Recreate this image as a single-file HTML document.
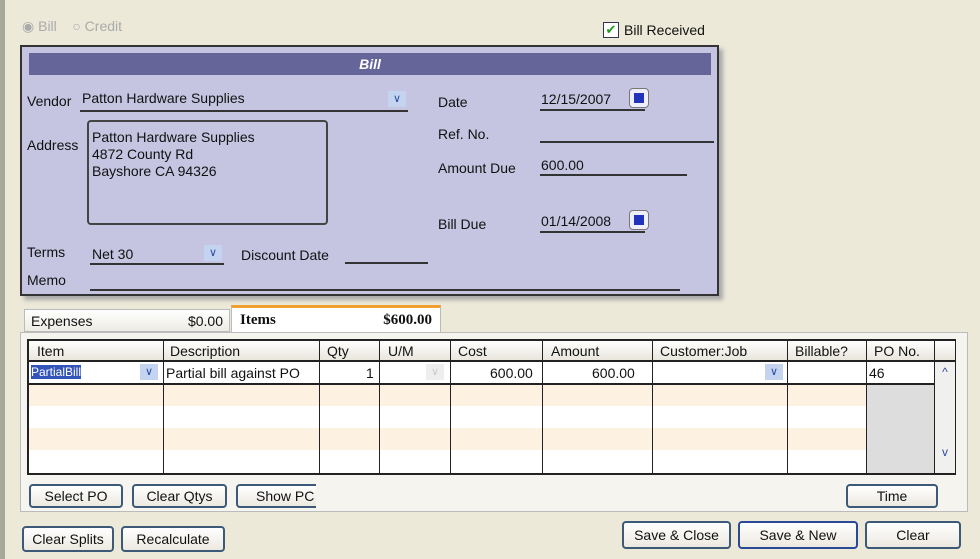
<!DOCTYPE html>
<html><head><style>
*{margin:0;padding:0;box-sizing:border-box}
body{width:980px;height:559px;overflow:hidden;background:#ece9d8;font-family:"Liberation Sans",sans-serif;font-size:14px;color:#111;position:relative}
.a{position:absolute}
.ln{position:absolute;height:2px;background:#333}
.btn{position:absolute;border:2px solid #3c5a78;border-radius:4px;background:linear-gradient(#fff,#ece9e0);text-align:center;font-size:14px;line-height:20px}
.dd{position:absolute;width:18px;height:16px;background:#c4d4f0;color:#2a4aa0;font-size:11px;text-align:center;line-height:16px}
.cal{position:absolute;width:20px;height:20px;border:1px solid #777;border-radius:4px;background:#eef;}
.cal:after{content:"";position:absolute;left:4px;top:4px;width:10px;height:10px;background:#2233bb}
.vl{position:absolute;top:339px;width:1px;height:135px;background:#222}
</style></head><body>
<div class="a" style="left:0;top:0;width:5px;height:559px;background:#a8a89a"></div>
<div class="a" style="left:22px;top:18px;color:#aaa">◉ Bill &nbsp;&nbsp;&nbsp;○ Credit</div>
<div class="a" style="left:603px;top:22px;width:16px;height:16px;border:1px solid #335;background:#fff;color:#1a9a1a;font-size:13px;line-height:14px;text-align:center">✔</div>
<div class="a" style="left:624px;top:22px;font-size:14px">Bill Received</div>
<!-- bill panel -->
<div class="a" style="left:20px;top:45px;width:699px;height:251px;background:#c5c5e2;border:2px solid #333;box-shadow:4px 4px 4px #aaa"></div>
<div class="a" style="left:29px;top:53px;width:682px;height:22px;background:#65659a;color:#fff;font-weight:bold;font-style:italic;text-align:center;line-height:22px;font-size:14px">Bill</div>
<div class="a" style="left:27px;top:93px">Vendor</div>
<div class="a" style="left:82px;top:90px">Patton Hardware Supplies</div>
<div class="dd" style="left:388px;top:91px">∨</div>
<div class="ln" style="left:80px;top:110px;width:328px"></div>
<div class="a" style="left:27px;top:137px">Address</div>
<div class="a" style="left:87px;top:120px;width:241px;height:105px;border:2px solid #444;border-radius:4px;padding:7px 3px;line-height:17px">Patton Hardware Supplies<br>4872 County Rd<br>Bayshore CA 94326</div>
<div class="a" style="left:27px;top:244px">Terms</div>
<div class="a" style="left:92px;top:246px">Net 30</div>
<div class="dd" style="left:204px;top:245px">∨</div>
<div class="ln" style="left:90px;top:263px;width:134px"></div>
<div class="a" style="left:241px;top:247px">Discount Date</div>
<div class="ln" style="left:345px;top:262px;width:83px"></div>
<div class="a" style="left:27px;top:272px">Memo</div>
<div class="ln" style="left:90px;top:289px;width:590px"></div>
<div class="a" style="left:438px;top:94px">Date</div>
<div class="a" style="left:541px;top:91px">12/15/2007</div>
<div class="cal" style="left:629px;top:88px"></div>
<div class="ln" style="left:540px;top:109px;width:105px"></div>
<div class="a" style="left:438px;top:126px">Ref. No.</div>
<div class="ln" style="left:540px;top:141px;width:174px"></div>
<div class="a" style="left:438px;top:160px">Amount Due</div>
<div class="a" style="left:541px;top:157px">600.00</div>
<div class="ln" style="left:540px;top:174px;width:147px"></div>
<div class="a" style="left:438px;top:216px">Bill Due</div>
<div class="a" style="left:541px;top:213px">01/14/2008</div>
<div class="cal" style="left:629px;top:210px"></div>
<div class="ln" style="left:540px;top:231px;width:105px"></div>
<!-- tabs -->
<div class="a" style="left:24px;top:309px;width:206px;height:23px;background:linear-gradient(#fff,#ecebe3);border:1px solid #bbb;padding:3px 6px">Expenses<span style="float:right">$0.00</span></div>
<div class="a" style="left:231px;top:305px;width:210px;height:28px;background:#fff;border:1px solid #bbb;border-top:3px solid #f0a030;padding:4px 8px;font-family:'Liberation Serif',serif;font-weight:bold;font-size:15px">Items<span style="float:right">$600.00</span></div>
<div class="a" style="left:20px;top:332px;width:948px;height:180px;background:#f5f4ee;border:1px solid #bbb"></div>
<!-- table -->
<div class="a" style="left:27px;top:339px;width:929px;height:136px;background:#fff;border:2px solid #222"></div>
<div class="a" style="left:29px;top:341px;width:926px;height:21px;background:linear-gradient(#fff,#e8e6dc);border-bottom:2px solid #222"></div>
<div class="a" style="left:29px;top:384px;width:905px;height:22px;background:#fdf2e2"></div>
<div class="a" style="left:29px;top:428px;width:905px;height:22px;background:#fdf2e2"></div>
<div class="a" style="left:866px;top:384px;width:68px;height:89px;background:#ddd"></div>
<div class="a" style="left:29px;top:383px;width:905px;height:2px;background:#222"></div>
<div class="a" style="left:935px;top:362px;width:20px;height:111px;background:#f0f0ee;color:#2a4aa0;font-size:12px;text-align:center;line-height:20px">^<br><br><br><br>v</div>
<div class="vl" style="left:163px"></div><div class="vl" style="left:319px"></div><div class="vl" style="left:379px"></div><div class="vl" style="left:450px"></div><div class="vl" style="left:542px"></div><div class="vl" style="left:652px"></div><div class="vl" style="left:787px"></div><div class="vl" style="left:866px"></div><div class="vl" style="left:934px"></div>
<div class="a" style="top:343px;left:37px">Item</div><div class="a" style="top:343px;left:170px">Description</div><div class="a" style="top:343px;left:327px">Qty</div><div class="a" style="top:343px;left:388px">U/M</div><div class="a" style="top:343px;left:458px">Cost</div><div class="a" style="top:343px;left:551px">Amount</div><div class="a" style="top:343px;left:660px">Customer:Job</div><div class="a" style="top:343px;left:795px">Billable?</div><div class="a" style="top:343px;left:874px">PO No.</div>
<div class="a" style="top:365px;left:31px;background:#3355bb;color:#fff;font-size:12px">PartialBill</div>
<div class="dd" style="left:140px;top:364px">∨</div>
<div class="a" style="top:365px;left:166px">Partial bill against PO</div>
<div class="a" style="top:365px;left:366px">1</div>
<div class="dd" style="left:426px;top:364px;background:#eee;color:#ccc">∨</div>
<div class="a" style="top:365px;left:490px">600.00</div>
<div class="a" style="top:365px;left:592px">600.00</div>
<div class="dd" style="left:765px;top:364px">∨</div>
<div class="a" style="top:365px;left:869px">46</div>
<div class="btn" style="left:29px;top:484px;width:94px;height:24px">Select PO</div>
<div class="btn" style="left:132px;top:484px;width:95px;height:24px">Clear Qtys</div>
<div class="btn" style="left:236px;top:484px;width:80px;height:24px;border-right:none;border-radius:4px 0 0 4px;text-align:left;padding-left:18px;white-space:nowrap;overflow:hidden">Show PC</div>
<div class="btn" style="left:846px;top:484px;width:92px;height:24px">Time</div>
<div class="btn" style="left:22px;top:526px;width:92px;height:26px;line-height:22px">Clear Splits</div>
<div class="btn" style="left:121px;top:526px;width:104px;height:26px;line-height:22px">Recalculate</div>
<div class="btn" style="left:622px;top:521px;width:109px;height:28px;line-height:24px">Save &amp; Close</div>
<div class="btn" style="left:738px;top:521px;width:120px;height:28px;line-height:24px;border-color:#2a4a98">Save &amp; New</div>
<div class="btn" style="left:865px;top:521px;width:96px;height:28px;line-height:24px">Clear</div>
</body></html>
